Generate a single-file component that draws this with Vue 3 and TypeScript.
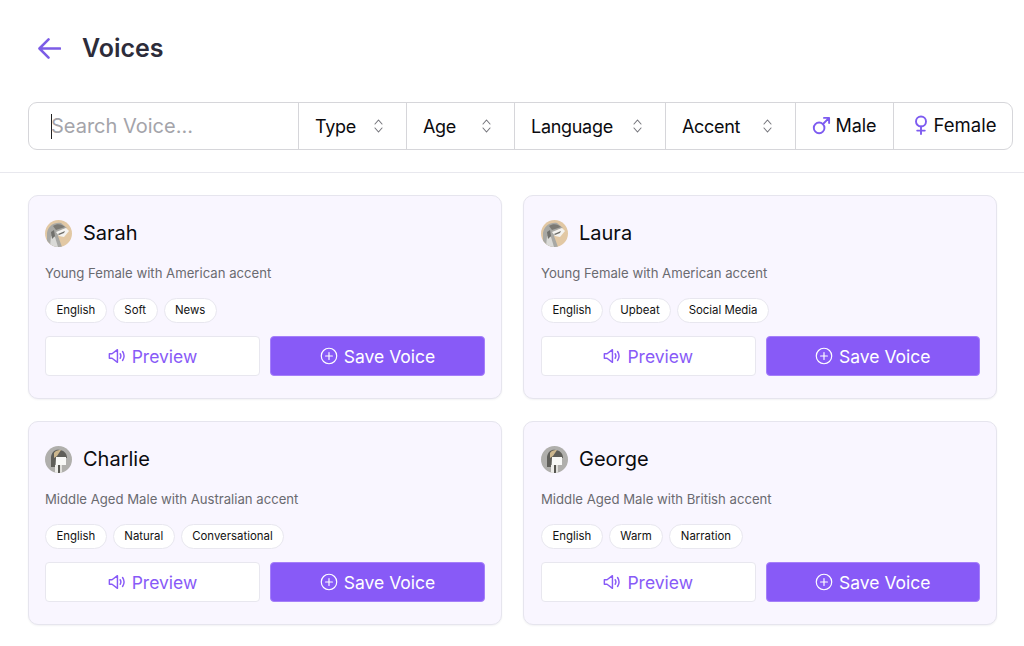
<script setup lang="ts">
interface Voice {
  name: string;
  desc: string;
  tags: string[];
  kind: 'f' | 'm';
}

const filters = [
  { label: 'Type', cls: 'bar__select--type' },
  { label: 'Age', cls: 'bar__select--age' },
  { label: 'Language', cls: 'bar__select--language' },
  { label: 'Accent', cls: 'bar__select--accent' },
];

const voices: Voice[] = [
  { name: 'Sarah', desc: 'Young Female with American accent', tags: ['English', 'Soft', 'News'], kind: 'f' },
  { name: 'Laura', desc: 'Young Female with American accent', tags: ['English', 'Upbeat', 'Social Media'], kind: 'f' },
  { name: 'Charlie', desc: 'Middle Aged Male with Australian accent', tags: ['English', 'Natural', 'Conversational'], kind: 'm' },
  { name: 'George', desc: 'Middle Aged Male with British accent', tags: ['English', 'Warm', 'Narration'], kind: 'm' },
];
</script>

<template>
  <div class="page">
    <header class="head">
      <svg class="head__back" viewBox="0 0 24 24" fill="none" stroke="currentColor" stroke-width="2.6" stroke-linecap="round" stroke-linejoin="round">
        <path d="M23 12H2M11 2.5 1.5 12l9.5 9.5" />
      </svg>
      <h1 class="head__title">Voices</h1>
    </header>

    <div class="bar">
      <div class="bar__search">
        <span class="bar__caret"></span>
        <span class="bar__placeholder">Search Voice...</span>
      </div>
      <div v-for="f in filters" :key="f.label" class="bar__select" :class="f.cls">
        <span>{{ f.label }}</span>
        <svg class="bar__chev" viewBox="0 0 10 16" fill="none" stroke="currentColor" stroke-width="1.1" stroke-linecap="round" stroke-linejoin="round">
          <path d="M1.5 6 5 2l3.5 4M1.5 10 5 14l3.5-4" />
        </svg>
      </div>
      <div class="bar__gender bar__gender--male">
        <svg class="bar__sex" viewBox="0 0 20 20" fill="none" stroke="currentColor" stroke-width="2" stroke-linecap="round" stroke-linejoin="round">
          <circle cx="7.5" cy="12.5" r="5.6" />
          <path d="M11.6 8.4 18 2M12.6 2H18v5.4" />
        </svg>
        <span>Male</span>
      </div>
      <div class="bar__gender bar__gender--female">
        <svg class="bar__sex bar__sex--f" viewBox="0 0 14 20" fill="none" stroke="currentColor" stroke-width="1.9" stroke-linecap="round">
          <circle cx="7" cy="6.5" r="5" />
          <path d="M7 11.5V19M3.2 15.6h7.6" />
        </svg>
        <span>Female</span>
      </div>
    </div>

    <hr class="rule" />

    <main class="grid">
      <article v-for="v in voices" :key="v.name" class="card">
        <div class="card__top">
          <svg class="card__avatar" viewBox="0 0 27 27">
            <defs>
              <clipPath id="avatar-clip"><circle cx="13.5" cy="13.5" r="13.5" /></clipPath>
            </defs>
            <g v-if="v.kind === 'f'" clip-path="url(#avatar-clip)">
              <rect width="27" height="27" fill="#e2c8a4" />
              <path d="M2 27V13C3 6 9 2 16 3l6 5-6 2-3 6 4 11Z" fill="#a8a8a4" />
              <path d="M11 12l10-4 3 3-5 6-5-1Z" fill="#f4f3f0" />
              <path d="M13 14l7-3-1 2-5 2Z" fill="#6f6e69" />
              <path d="M5 27l1-11 4 1 3 10Z" fill="#dadad7" />
              <path d="M8 6c4-3 9-2 12 1l-9 3Z" fill="#7c7a73" />
              <path d="M6 12l3-2 1 6-3 3Z" fill="#70706c" />
            </g>
            <g v-else clip-path="url(#avatar-clip)">
              <rect width="27" height="27" fill="#b0afac" />
              <path d="M6 21V11c1-6 5-8 9-7 5 1 7 4 7 8H11l-1 9Z" fill="#5f5e59" />
              <path d="M9 7c2-3 5-3 7-3l-4 6-3 2Z" fill="#cdb78e" />
              <rect x="11" y="11" width="10" height="8" fill="#f8f8f6" />
              <path d="M10 19h3v8h-3Z" fill="#eeedea" />
              <path d="M15 19h2v8h-2Z" fill="#e0dfdb" />
              <path d="M13 19h2v8h-2Z" fill="#55544f" />
            </g>
          </svg>
          <h2 class="card__name">{{ v.name }}</h2>
        </div>
        <p class="card__desc">{{ v.desc }}</p>
        <ul class="card__tags">
          <li v-for="t in v.tags" :key="t" class="card__tag">{{ t }}</li>
        </ul>
        <div class="card__actions">
          <button class="btn btn--ghost" type="button">
            <svg class="btn__icon" viewBox="0 0 20 20" fill="none" stroke="currentColor" stroke-width="1.6" stroke-linecap="round" stroke-linejoin="round">
              <path d="M1.5 7.5v5h3l6 4.5V3l-6 4.5h-3Z" />
              <path d="M13.5 7.5c1 1.5 1 3.5 0 5M16.2 5c2 3 2 7 0 10" />
            </svg>
            Preview
          </button>
          <button class="btn btn--solid" type="button">
            <svg class="btn__icon" viewBox="0 0 20 20" fill="none" stroke="currentColor" stroke-width="1.3" stroke-linecap="round">
              <circle cx="10" cy="10" r="8.6" />
              <path d="M10 6.2v7.6M6.2 10h7.6" />
            </svg>
            Save Voice
          </button>
        </div>
      </article>
    </main>
  </div>
</template>

<style>
html,
body {
  background: #fff;
}
</style>

<style scoped>
.page {
  width: 1024px;
  height: 646px;
  overflow: hidden;
  font-family: Inter, "Liberation Sans", sans-serif;
  color: #0b0b0f;
  box-sizing: border-box;
  padding-top: 30px;
}

.head {
  display: flex;
  align-items: center;
  height: 36px;
  padding-left: 38px;
  gap: 21px;
}

.head__back {
  width: 23px;
  height: 23px;
  color: #7c5ce6;
}

.head__title {
  margin: 0;
  font-size: 25px;
  font-weight: 600;
  color: #2d2c3a;
}

.bar {
  display: flex;
  width: 985px;
  height: 48px;
  margin: 36px 0 0 28px;
  box-sizing: border-box;
  border: 1px solid #d6d6da;
  border-radius: 9px;
  background: #fff;
  font-size: 18px;
}

.bar__search {
  display: flex;
  align-items: center;
  width: 269px;
  padding-left: 22px;
  box-sizing: border-box;
  flex: none;
}

.bar__caret {
  width: 1px;
  height: 25px;
  background: #222;
}

.bar__placeholder {
  margin-left: -1px;
  font-size: 20px;
  color: #a4a4aa;
}

.bar__select,
.bar__gender {
  display: flex;
  align-items: center;
  flex: none;
  box-sizing: border-box;
  border-left: 1px solid #d6d6da;
}

.bar__select {
  justify-content: space-between;
  padding: 0 22px 0 16px;
  letter-spacing: -0.3px;
}

.bar__select--type,
.bar__select--age {
  width: 108px;
}

.bar__select--language {
  width: 151px;
}

.bar__select--accent {
  width: 130px;
}

.bar__gender {
  justify-content: center;
  gap: 4px;
  padding-bottom: 2px;
}

.bar__gender--male {
  width: 98px;
}

.bar__gender--female {
  flex: 1;
  gap: 6px;
  padding-left: 4px;
  font-size: 18.5px;
}

.bar__chev {
  width: 11px;
  height: 16px;
  color: #77777d;
}

.bar__sex {
  width: 19px;
  height: 19px;
  color: #7d5bf0;
}

.bar__sex--f {
  width: 14px;
  height: 20px;
}

.rule {
  margin: 22px 0 0;
  border: 0;
  border-top: 1px solid #e8e8ee;
}

.grid {
  display: grid;
  grid-template-columns: 474px 474px;
  grid-auto-rows: 204px;
  gap: 22px 21px;
  padding: 22px 0 0 28px;
}

.card {
  box-sizing: border-box;
  padding: 16px;
  background: #f9f6ff;
  border: 1px solid #e6e5ee;
  border-radius: 10px;
  box-shadow: 0 1px 2px rgba(30, 30, 60, 0.06);
}

.card:nth-child(even) {
  padding-left: 17px;
}

.card__top {
  display: flex;
  align-items: center;
  gap: 11px;
  height: 42px;
}

.card__avatar {
  width: 27px;
  height: 27px;
  flex: none;
}

.card__name {
  margin: 0;
  font-size: 20px;
  font-weight: 400;
  color: #0b0b0f;
}

.card__desc {
  margin: 9px 0 0;
  font-size: 13.15px;
  line-height: 20px;
  color: #6a6a70;
}

.card__tags {
  display: flex;
  gap: 6px;
  margin: 15px 0 0;
  padding: 0;
  list-style: none;
}

.card__tag {
  box-sizing: border-box;
  height: 25px;
  padding: 0 10.5px;
  line-height: 23px;
  font-size: 11.4px;
  color: #111;
  background: #fff;
  border: 1px solid #e8e7ef;
  border-radius: 13px;
}

.card__actions {
  display: grid;
  grid-template-columns: 1fr 1fr;
  gap: 10px;
  margin-top: 13px;
}

.btn {
  display: flex;
  align-items: center;
  justify-content: center;
  gap: 6px;
  height: 40px;
  padding: 0;
  font-family: inherit;
  font-size: 17.5px;
  border-radius: 4px;
}

.btn--ghost {
  background: #fff;
  color: #885af7;
  border: 1px solid #e8e7ef;
}

.btn--solid {
  background: #885af7;
  color: #fff;
  border: 1px solid #a57ff9;
}

.btn__icon {
  width: 18px;
  height: 18px;
}
</style>
